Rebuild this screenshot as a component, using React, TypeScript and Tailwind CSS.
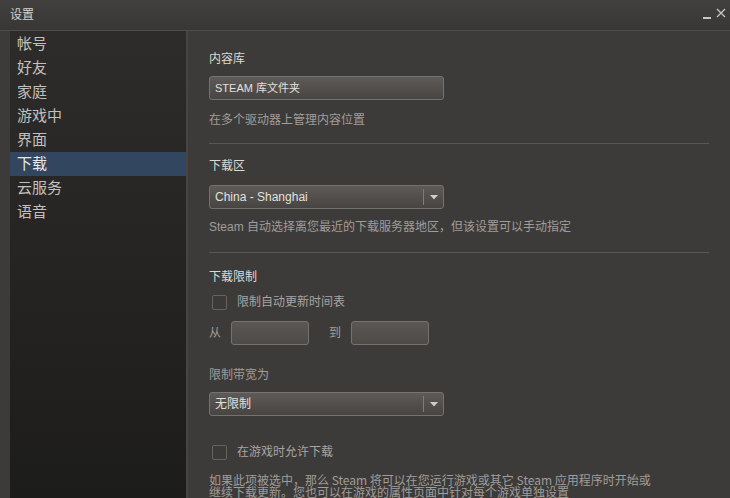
import React from 'react';

const navItems = ['帐号', '好友', '家庭', '游戏中', '界面', '下载', '云服务', '语音'];

function Dropdown({ value }: { value: string }) {
  return (
    <div className="flex h-[24px] w-[235px] items-center rounded-[3px] border border-[#76726e] bg-gradient-to-b from-[#5d5a57] to-[#474441]">
      <span className="flex-1 pl-[5px] text-[12px] text-[#e2e0de]">{value}</span>
      <span className="h-[16px] w-px bg-[#807c78]" />
      <span className="flex w-[19px] justify-center">
        <svg width="8" height="5" viewBox="0 0 8 5">
          <path d="M0 0h8L4 4.5z" fill="#cfcdcb" />
        </svg>
      </span>
    </div>
  );
}

function Checkbox({ label }: { label: string }) {
  return (
    <div className="flex items-center gap-[10px] pl-[3px]">
      <span className="h-[15px] w-[15px] rounded-[2px] border border-[#66625e] bg-[#3c3a38]" />
      <span className="text-[12px] text-[#a7a4a1]">{label}</span>
    </div>
  );
}

function TimeBox() {
  return <span className="h-[24px] w-[78px] rounded-[3px] border border-[#76726e] bg-gradient-to-b from-[#5a5754] to-[#4d4a47]" />;
}

export default function App() {
  return (
    <div
      className="flex h-[498px] w-[730px] flex-col overflow-hidden bg-[#3d3b39] text-[#d6d4d2]"
      style={{ fontFamily: '"Liberation Sans", "Noto Sans CJK SC", sans-serif' }}
    >
      {/* title bar */}
      <div className="flex h-[31px] shrink-0 items-center justify-between border-b border-[#4f4d4b] bg-gradient-to-b from-[#42403e] to-[#393735] pl-[10px] pr-[4px]">
        <span className="text-[12px] text-[#d4d2d0]">设置</span>
        <div className="flex items-center gap-[5px] pb-[4px] text-[#c8c6c4]">
          <span className="mt-[10px] h-[1.5px] w-[8px] bg-[#c8c6c4]" />
          <svg width="10" height="10" viewBox="0 0 10 10">
            <path d="M1 1l8 8M9 1L1 9" stroke="#c8c6c4" strokeWidth="1.3" />
          </svg>
        </div>
      </div>

      <div className="flex min-h-0 flex-1">
        {/* sidebar */}
        <div className="ml-[10px] w-[178px] border-r-2 border-[#474543] bg-gradient-to-b from-[#2e2c2a] to-[#1c1c1b] pt-[1px]">
          {navItems.map((item) => (
            <div
              key={item}
              className={`flex h-[24px] items-center pl-[7px] text-[15px] ${
                item === '下载' ? 'bg-[#33465f] text-[#e8e8e8]' : 'text-[#c2c0be]'
              }`}
            >
              {item}
            </div>
          ))}
        </div>

        {/* content */}
        <div className="flex-1 pl-[21px] pr-[21px] pt-[20px]">
          <div className="text-[12px] leading-[16px] text-[#dcdad8]">内容库</div>
          <div className="mt-[9px] flex h-[24px] w-[235px] items-center rounded-[3px] border border-[#76726e] bg-gradient-to-b from-[#5d5a57] to-[#474441] pl-[5px] text-[11px] text-[#e2e0de]">
            STEAM 库文件夹
          </div>
          <div className="mt-[12px] text-[12px] leading-[16px] text-[#a09d9a]">在多个驱动器上管理内容位置</div>

          <div className="mt-[15px] h-px bg-[#5a5856]" />

          <div className="mt-[14px] text-[12px] leading-[16px] text-[#dcdad8]">下载区</div>
          <div className="mt-[11px]">
            <Dropdown value="China - Shanghai" />
          </div>
          <div className="mt-[10px] text-[12px] leading-[16px] text-[#a09d9a]">
            Steam 自动选择离您最近的下载服务器地区，但该设置可以手动指定
          </div>

          <div className="mt-[17px] h-px bg-[#5a5856]" />

          <div className="mt-[16px] text-[12px] leading-[16px] text-[#dcdad8]">下载限制</div>
          <div className="mt-[8px]">
            <Checkbox label="限制自动更新时间表" />
          </div>
          <div className="mt-[10px] flex items-center">
            <span className="w-[22px] text-[12px] text-[#a09d9a]">从</span>
            <TimeBox />
            <span className="w-[42px] pl-[20px] text-[12px] text-[#a09d9a]">到</span>
            <TimeBox />
          </div>

          <div className="mt-[22px] text-[12px] leading-[16px] text-[#a09d9a]">限制带宽为</div>
          <div className="mt-[9px]">
            <Dropdown value="无限制" />
          </div>

          <div className="mt-[27px]">
            <Checkbox label="在游戏时允许下载" />
          </div>
          <div
            className="mt-[13px] w-[450px] text-[12px] leading-[12px] text-[#a09d9a]"
            style={{ fontFamily: '"Noto Sans CJK SC", sans-serif' }}
          >
            如果此项被选中，那么 Steam 将可以在您运行游戏或其它 Steam 应用程序时开始或继续下载更新。您也可以在游戏的属性页面中针对每个游戏单独设置
          </div>
        </div>
      </div>
    </div>
  );
}
